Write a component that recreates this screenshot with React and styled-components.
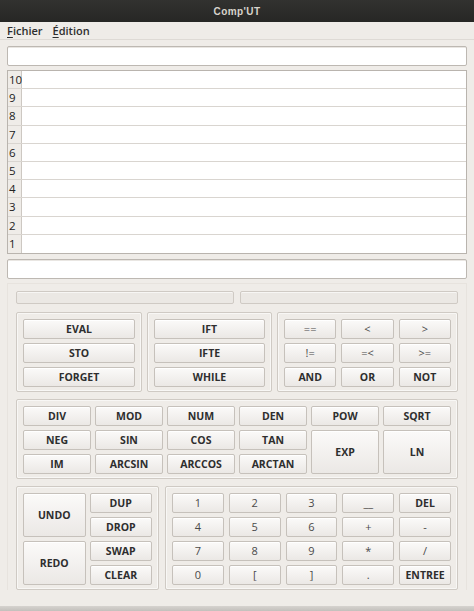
import React from "react";
import styled, { createGlobalStyle } from "styled-components";

const Global = createGlobalStyle`
  html, body { margin: 0; padding: 0; background: #efece8; }
  body { font-family: "Open Sans", "DejaVu Sans", sans-serif; }
  * { box-sizing: border-box; }
`;

const Window = styled.div`
  width: 474px;
  height: 611px;
  display: flex;
  flex-direction: column;
  background: #efece8;
  overflow: hidden;
`;

const TitleBar = styled.div`
  height: 22px;
  flex: none;
  background: linear-gradient(#323230, #272725);
  display: flex;
  align-items: center;
  justify-content: center;
  color: #d8d4cc;
  font-family: "Liberation Sans", Arial, sans-serif;
  font-weight: bold;
  font-size: 10px;
  letter-spacing: 0.4px;
  padding-top: 1px;
`;

const MenuBar = styled.div`
  height: 18px;
  flex: none;
  display: flex;
  align-items: center;
  gap: 10px;
  padding: 1px 7px 0;
  border-bottom: 1px solid #dedad5;
  font-size: 11px;
  font-weight: 600;
  color: #2e2e2e;
`;

const MenuItem = styled.span`
  line-height: 14px;
`;

const Mnemonic = styled.span`
  text-decoration: underline;
  text-decoration-thickness: 1px;
  text-underline-offset: 2px;
`;

const Content = styled.div`
  flex: 1;
  display: flex;
  flex-direction: column;
  padding: 6px 7px 0;
`;

const LineInput = styled.div`
  height: ${(p) => p.$h || 20}px;
  background: #ffffff;
  border: 1px solid #bdb8b2;
  border-radius: 2px;
  box-shadow: inset 0 1px 0 #e9e6e2;
  margin-top: ${(p) => p.$mt || 0}px;
  flex: none;
`;

const Stack = styled.div`
  margin-top: 4px;
  border: 1px solid #b9b4ae;
  background: #fff;
  display: flex;
  flex-direction: column;
  flex: none;
`;

const StackRow = styled.div`
  height: 18.2px;
  display: flex;
  border-bottom: ${(p) => (p.$last ? "none" : "1px solid #d9d5d0")};
`;

const StackLabel = styled.div`
  width: 14px;
  flex: none;
  background: #efece8;
  border-right: 1px solid #cdc8c2;
  font-size: 11.5px;
  color: #222;
  padding-left: 1px;
  line-height: 18px;
`;

const StackCell = styled.div`
  flex: 1;
  background: #fff;
`;

const CalcFrame = styled.div`
  margin-top: 4px;
  border: 1px solid #e7e3de;
  border-bottom: none;
  padding: 7px 8px 0;
  display: flex;
  flex-direction: column;
  gap: 7px;
  flex: none;
`;

const StatusRow = styled.div`
  display: grid;
  grid-template-columns: 1fr 1fr;
  gap: 6px;
  margin-bottom: 1px;
`;

const StatusBar = styled.div`
  height: 13px;
  border: 1px solid #cfcac4;
  border-radius: 2px;
  background: #ebe8e4;
  box-shadow: inset 0 1px 0 #f7f6f4;
`;

const GroupRow = styled.div`
  display: grid;
  grid-template-columns: ${(p) => p.$cols};
  gap: ${(p) => p.$gap || 5}px;
`;

const Group = styled.div`
  border: 1px solid #cfcac4;
  border-radius: 2px;
  box-shadow: inset 0 0 0 1px #f8f7f5;
  padding: 6px 6px 4px;
  display: grid;
  grid-template-columns: ${(p) => p.$cols || "1fr"};
  grid-auto-rows: 20px;
  column-gap: ${(p) => p.$cgap || 5}px;
  row-gap: 4px;
`;

const Button = styled.div`
  display: flex;
  align-items: center;
  justify-content: center;
  border: 1px solid #c6c1bb;
  border-radius: 2px;
  background: linear-gradient(#fbfaf9, #ebe8e5);
  box-shadow: inset 0 1px 0 #ffffff;
  font-size: ${(p) => (p.$light ? "11px" : "10.5px")};
  font-weight: ${(p) => (p.$light ? 400 : 700)};
  color: ${(p) => (p.$light ? "#4a4a4a" : "#2e2e2e")};
  grid-row: ${(p) => (p.$rows ? `span ${p.$rows}` : "auto")};
  white-space: nowrap;
  user-select: none;
`;

const BottomShade = styled.div`
  margin-top: auto;
  height: 5px;
  flex: none;
  background: linear-gradient(#d6d3cf, #c3c0bc);
`;

const rows = [10, 9, 8, 7, 6, 5, 4, 3, 2, 1];

export default function App() {
  return (
    <>
      <Global />
      <Window>
        <TitleBar>Comp'UT</TitleBar>
        <MenuBar>
          <MenuItem>
            <Mnemonic>F</Mnemonic>ichier
          </MenuItem>
          <MenuItem>
            <Mnemonic>É</Mnemonic>dition
          </MenuItem>
        </MenuBar>
        <Content>
          <LineInput $h={20} />
          <Stack>
            {rows.map((n, i) => (
              <StackRow key={n} $last={i === rows.length - 1}>
                <StackLabel>{n}</StackLabel>
                <StackCell />
              </StackRow>
            ))}
          </Stack>
          <LineInput $h={20} $mt={5} />
          <CalcFrame>
            <StatusRow>
              <StatusBar />
              <StatusBar />
            </StatusRow>
            <GroupRow $cols="126px 125px 1fr" $gap={5}>
              <Group>
                <Button>EVAL</Button>
                <Button>STO</Button>
                <Button>FORGET</Button>
              </Group>
              <Group>
                <Button>IFT</Button>
                <Button>IFTE</Button>
                <Button>WHILE</Button>
              </Group>
              <Group $cols="1fr 1fr 1fr">
                <Button $light>==</Button>
                <Button $light>&lt;</Button>
                <Button $light>&gt;</Button>
                <Button $light>!=</Button>
                <Button $light>=&lt;</Button>
                <Button $light>&gt;=</Button>
                <Button>AND</Button>
                <Button>OR</Button>
                <Button>NOT</Button>
              </Group>
            </GroupRow>
            <Group $cols="repeat(6, 1fr)" $cgap={4}>
              <Button>DIV</Button>
              <Button>MOD</Button>
              <Button>NUM</Button>
              <Button>DEN</Button>
              <Button>POW</Button>
              <Button>SQRT</Button>
              <Button>NEG</Button>
              <Button>SIN</Button>
              <Button>COS</Button>
              <Button>TAN</Button>
              <Button $rows={2}>EXP</Button>
              <Button $rows={2}>LN</Button>
              <Button>IM</Button>
              <Button>ARCSIN</Button>
              <Button>ARCCOS</Button>
              <Button>ARCTAN</Button>
            </Group>
            <GroupRow $cols="143px 1fr" $gap={6}>
              <Group $cols="1fr 1fr" $cgap={4}>
                <Button $rows={2}>UNDO</Button>
                <Button>DUP</Button>
                <Button>DROP</Button>
                <Button $rows={2}>REDO</Button>
                <Button>SWAP</Button>
                <Button>CLEAR</Button>
              </Group>
              <Group $cols="repeat(5, 1fr)" $cgap={5}>
                <Button $light>1</Button>
                <Button $light>2</Button>
                <Button $light>3</Button>
                <Button $light>__</Button>
                <Button>DEL</Button>
                <Button $light>4</Button>
                <Button $light>5</Button>
                <Button $light>6</Button>
                <Button $light>+</Button>
                <Button $light>-</Button>
                <Button $light>7</Button>
                <Button $light>8</Button>
                <Button $light>9</Button>
                <Button $light>*</Button>
                <Button $light>/</Button>
                <Button $light>0</Button>
                <Button $light>[</Button>
                <Button $light>]</Button>
                <Button $light>.</Button>
                <Button>ENTREE</Button>
              </Group>
            </GroupRow>
          </CalcFrame>
        </Content>
        <BottomShade />
      </Window>
    </>
  );
}
